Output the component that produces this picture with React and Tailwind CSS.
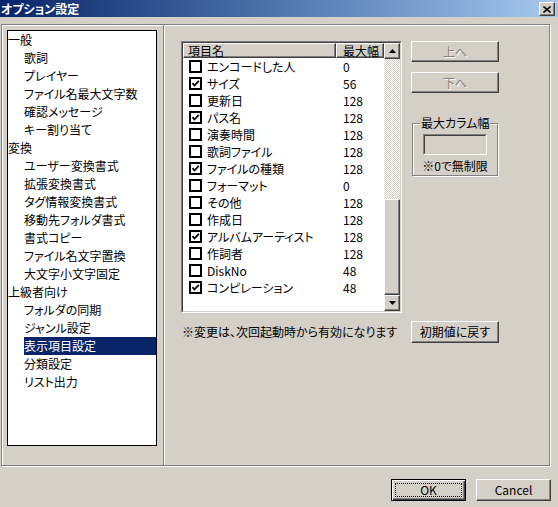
import React from "react";

const raised =
  "border border-t-white border-l-white border-r-[#404040] border-b-[#404040] shadow-[inset_-1px_-1px_0_#808080]";

const tree = [
  { t: "一般", lv: 0 },
  { t: "歌詞", lv: 1 },
  { t: "プレイヤー", lv: 1 },
  { t: "ファイル名最大文字数", lv: 1 },
  { t: "確認メッセージ", lv: 1 },
  { t: "キー割り当て", lv: 1 },
  { t: "変換", lv: 0 },
  { t: "ユーザー変換書式", lv: 1 },
  { t: "拡張変換書式", lv: 1 },
  { t: "タグ情報変換書式", lv: 1 },
  { t: "移動先フォルダ書式", lv: 1 },
  { t: "書式コピー", lv: 1 },
  { t: "ファイル名文字置換", lv: 1 },
  { t: "大文字小文字固定", lv: 1 },
  { t: "上級者向け", lv: 0 },
  { t: "フォルダの同期", lv: 1 },
  { t: "ジャンル設定", lv: 1 },
  { t: "表示項目設定", lv: 1, sel: true },
  { t: "分類設定", lv: 1 },
  { t: "リスト出力", lv: 1 },
];

const rows = [
  ["エンコードした人", "0", false],
  ["サイズ", "56", true],
  ["更新日", "128", false],
  ["パス名", "128", true],
  ["演奏時間", "128", false],
  ["歌詞ファイル", "128", false],
  ["ファイルの種類", "128", true],
  ["フォーマット", "0", false],
  ["その他", "128", false],
  ["作成日", "128", false],
  ["アルバムアーティスト", "128", true],
  ["作詞者", "128", false],
  ["DiskNo", "48", false],
  ["コンピレーション", "48", true],
];

function Check({ on }) {
  return (
    <div className="w-[13px] h-[13px] border-2 border-black bg-white flex items-center justify-center shrink-0">
      {on && (
        <svg width="9" height="9" viewBox="0 0 9 9">
          <polyline points="1.5,4.2 3.5,6.5 7.8,1.8" fill="none" stroke="#000" strokeWidth="1.8" />
        </svg>
      )}
    </div>
  );
}

function Arrow({ up }) {
  return (
    <svg width="7" height="4" viewBox="0 0 7 4">
      {up ? <polygon points="3.5,0 7,4 0,4" fill="#000" /> : <polygon points="0,0 7,0 3.5,4" fill="#000" />}
    </svg>
  );
}

function Btn({ children, disabled, className = "" }) {
  return (
    <div
      className={`${raised} flex items-center justify-center bg-[#d4d0c8] ${
        disabled ? "text-[#808080] [text-shadow:1px_1px_0_#ffffff]" : "text-black"
      } ${className}`}
    >
      {children}
    </div>
  );
}

export default function App() {
  return (
    <div className="w-[558px] h-[507px] overflow-hidden bg-[#d4d0c8] text-[12px] leading-none text-black [font-family:'Noto_Sans_CJK_JP',sans-serif] [font-feature-settings:'palt']">
      {/* title bar */}
      <div className="h-[17px] flex items-center justify-between bg-linear-to-r from-[#0a246a] to-[#a6caf0]">
        <span className="pl-[1px] text-white font-bold text-[12px] leading-[17px]">オプション設定</span>
        <div className={`${raised} mr-[3px] mt-[1px] w-[16px] h-[14px] flex items-center justify-center bg-[#d4d0c8]`}>
          <svg width="8" height="7" viewBox="0 0 8 7">
            <path d="M0.5 0.5 L7.5 6.5 M7.5 0.5 L0.5 6.5" stroke="#000" strokeWidth="1.6" />
          </svg>
        </div>
      </div>

      {/* main etched frame */}
      <div className="mt-[7px] ml-[1px] w-[549px] h-[442px] border border-[#808080] shadow-[inset_1px_1px_0_#ffffff,1px_1px_0_#ffffff] flex">
        {/* left tree */}
        <div className="w-[161px] pl-[5px] pt-[5px]">
          <div className="w-[150px] h-[416px] border border-black bg-white">
            {tree.map((it) => (
              <div key={it.t} className="h-[18px] flex">
                <div
                  className={`flex-1 h-[18px] leading-[18px] whitespace-nowrap ${it.lv ? "ml-[16px]" : ""} ${
                    it.sel ? "bg-[#0a246a] text-white" : ""
                  }`}
                >
                  {it.t}
                </div>
              </div>
            ))}
          </div>
        </div>

        {/* divider */}
        <div className="w-[2px] border-l border-l-[#808080] border-r border-r-white" />

        {/* right panel */}
        <div className="flex-1 pl-[16px] pt-[16px] flex flex-col">
          <div className="flex">
            {/* list view */}
            <div className="w-[221px] h-[272px] border border-t-[#808080] border-l-[#808080] border-r-white border-b-white flex">
              <div className="flex-1 border border-t-[#404040] border-l-[#404040] border-r-[#d4d0c8] border-b-[#d4d0c8] flex bg-white">
                <div className="flex-1 flex flex-col">
                  <div className="h-[15px] flex bg-[#d4d0c8]">
                    <div className={`${raised} w-[153px] pl-[4px] leading-[13px]`}>項目名</div>
                    <div className={`${raised} w-[48px] pl-[6px] leading-[13px]`}>最大幅</div>
                  </div>
                  {rows.map(([name, v, on]) => (
                    <div key={name} className="h-[17px] flex items-center">
                      <div className="w-[153px] flex items-center pl-[6px] gap-[5px] whitespace-nowrap">
                        <Check on={on} />
                        <span>{name}</span>
                      </div>
                      <div className="pl-[7px]">{v}</div>
                    </div>
                  ))}
                </div>
                {/* scrollbar */}
                <div className="w-[16px] flex flex-col">
                  <div className={`${raised} h-[16px] flex items-center justify-center bg-[#d4d0c8]`}>
                    <Arrow up />
                  </div>
                  <div className="flex-1 bg-[repeating-conic-gradient(#d4d0c8_0%_25%,#ffffff_0%_50%)] bg-[length:2px_2px]" />
                  <div className={`${raised} h-[96px] bg-[#d4d0c8]`} />
                  <div className={`${raised} h-[16px] flex items-center justify-center bg-[#d4d0c8]`}>
                    <Arrow />
                  </div>
                </div>
              </div>
            </div>

            {/* right buttons */}
            <div className="ml-[9px] w-[88px] flex flex-col">
              <Btn disabled className="h-[21px]">上へ</Btn>
              <Btn disabled className="h-[21px] mt-[10px]">下へ</Btn>
              <fieldset className="mt-[23px] ml-[1px] w-[86px] h-[60px] border border-[#808080] shadow-[inset_1px_1px_0_#ffffff,1px_1px_0_#ffffff] p-0">
                <legend className="ml-[7px] px-[1px] leading-[14px] whitespace-nowrap bg-[#d4d0c8]">最大カラム幅</legend>
                <div className="flex flex-col items-center">
                  <div className="mt-[4px] w-[64px] h-[21px] border border-t-[#808080] border-l-[#808080] border-r-white border-b-white">
                    <div className="w-full h-full border border-t-[#404040] border-l-[#404040] border-r-[#d4d0c8] border-b-[#d4d0c8]" />
                  </div>
                  <div className="mt-[5px] whitespace-nowrap">※0で無制限</div>
                </div>
              </fieldset>
            </div>
          </div>

          <div className="mt-[8px] flex items-center">
            <div className="ml-[1px] w-[229px] whitespace-nowrap">※変更は、次回起動時から有効になります</div>
            <Btn className="w-[88px] h-[22px]">初期値に戻す</Btn>
          </div>
        </div>
      </div>

      {/* bottom buttons */}
      <div className="mt-[13px] flex justify-end gap-[10px] pr-[7px]">
        <div className="w-[75px] h-[22px] border border-black shadow-[inset_1px_1px_0_#ffffff,inset_-1px_-1px_0_#404040,inset_-2px_-2px_0_#808080] p-[3px]">
          <div className="w-full h-full border border-dotted border-black flex items-center justify-center">OK</div>
        </div>
        <Btn className="w-[75px] h-[22px]">Cancel</Btn>
      </div>
    </div>
  );
}
